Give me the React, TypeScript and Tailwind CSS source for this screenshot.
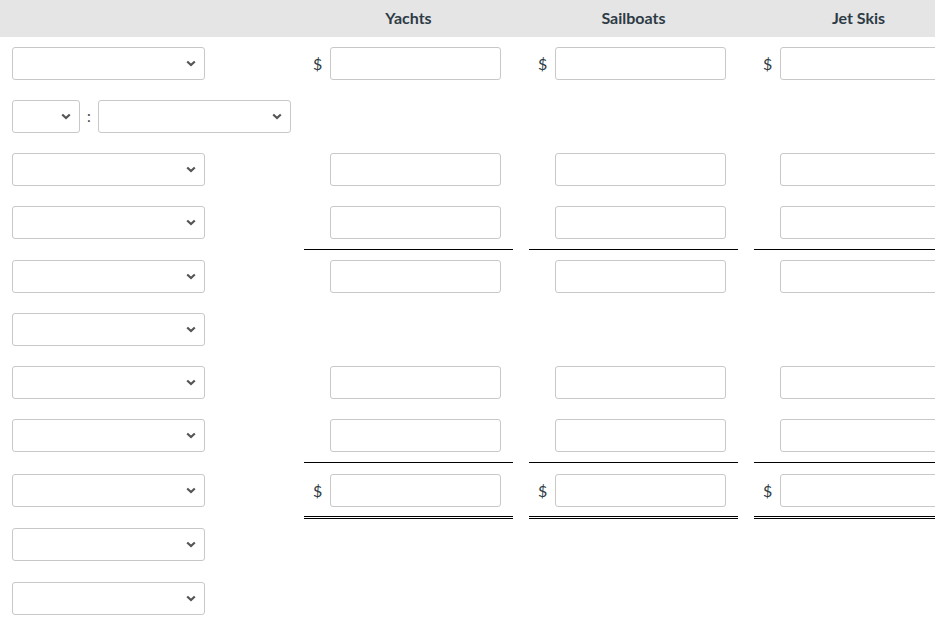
import React from "react";

type Row = {
  kind: "select" | "split";
  amounts: boolean;
  dollar?: boolean;
  line?: "single" | "double";
  pad?: string;
};

// pad tweaks keep the rows lined up with the original form
const rows: Row[] = [
  { kind: "select", amounts: true, dollar: true },
  { kind: "split", amounts: false },
  { kind: "select", amounts: true },
  { kind: "select", amounts: true, line: "single" },
  { kind: "select", amounts: true },
  { kind: "select", amounts: false },
  { kind: "select", amounts: true },
  { kind: "select", amounts: true, line: "single" },
  { kind: "select", amounts: true, dollar: true, line: "double", pad: "pt-[11px] pb-[9px]" },
  { kind: "select", amounts: false, pad: "pt-[9px] pb-[10px]" },
  { kind: "select", amounts: false, pad: "pt-[11px] pb-[10px]" },
];

const columns = ["Yachts", "Sailboats", "Jet Skis"];

function Chevron() {
  return (
    <svg width="10" height="7" viewBox="0 0 10 7" className="shrink-0">
      <path d="M1.2 1.5 L5 5 L8.8 1.5" fill="none" stroke="#555" strokeWidth="2.2" />
    </svg>
  );
}

function FakeSelect({ width }: { width: string }) {
  return (
    <div
      className={`${width} h-[33px] rounded-[3px] border border-[#c8c8c8] bg-white flex items-center justify-end pr-[8px]`}
    >
      <Chevron />
    </div>
  );
}

function AmountCell({ row }: { row: Row }) {
  const border =
    row.line === "single"
      ? "border-b border-black"
      : row.line === "double"
      ? "border-b-[3px] border-double border-black"
      : "";
  return (
    <div className="w-[225px] shrink-0 px-2">
      <div className={`flex items-center pl-[9px] ${row.pad ?? "py-[10px]"} ${border}`}>
        <span className="w-[9px] text-[16px] leading-[33px] text-[#2d3b45]">
          {row.dollar ? "$" : ""}
        </span>
        {row.amounts ? (
          <div className="ml-[8px] w-[171px] h-[33px] rounded-[3px] border border-[#c8c8c8] bg-white" />
        ) : (
          <div className="ml-[8px] h-[33px]" />
        )}
      </div>
    </div>
  );
}

export default function App() {
  return (
    <div
      className="w-[935px] h-[643px] overflow-hidden bg-white"
      style={{ fontFamily: "Lato, 'Liberation Sans', sans-serif" }}
    >
      <div className="flex h-[37px] bg-[#e5e5e5] w-[971px]">
        <div className="w-[296px] shrink-0" />
        {columns.map((c) => (
          <div
            key={c}
            className="w-[225px] shrink-0 flex items-center justify-center pb-[2px] text-[16px] font-bold text-[#2d3b45]"
          >
            {c}
          </div>
        ))}
      </div>
      {rows.map((row, i) => (
        <div key={i} className="flex w-[971px]">
          <div className={`w-[296px] shrink-0 pl-3 ${row.pad ?? "py-[10px]"} flex items-start`}>
            {row.kind === "select" ? (
              <FakeSelect width="w-[193px]" />
            ) : (
              <div className="flex items-center">
                <FakeSelect width="w-[68px]" />
                <span className="mx-[7px] text-[15px] text-[#444]">:</span>
                <FakeSelect width="w-[193px]" />
              </div>
            )}
          </div>
          {columns.map((c) => (
            <AmountCell key={c} row={row} />
          ))}
        </div>
      ))}
    </div>
  );
}
